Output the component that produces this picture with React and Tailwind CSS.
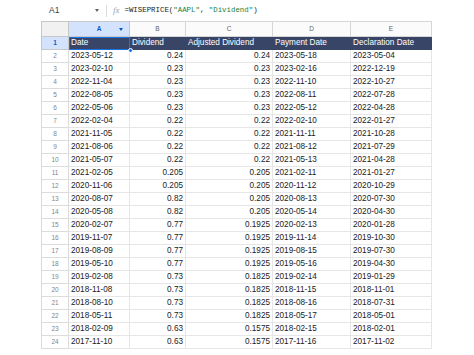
import React from 'react';

const rows = [
  ['2023-05-12', '0.24', '0.24', '2023-05-18', '2023-05-04'],
  ['2023-02-10', '0.23', '0.23', '2023-02-16', '2022-12-19'],
  ['2022-11-04', '0.23', '0.23', '2022-11-10', '2022-10-27'],
  ['2022-08-05', '0.23', '0.23', '2022-08-11', '2022-07-28'],
  ['2022-05-06', '0.23', '0.23', '2022-05-12', '2022-04-28'],
  ['2022-02-04', '0.22', '0.22', '2022-02-10', '2022-01-27'],
  ['2021-11-05', '0.22', '0.22', '2021-11-11', '2021-10-28'],
  ['2021-08-06', '0.22', '0.22', '2021-08-12', '2021-07-29'],
  ['2021-05-07', '0.22', '0.22', '2021-05-13', '2021-04-28'],
  ['2021-02-05', '0.205', '0.205', '2021-02-11', '2021-01-27'],
  ['2020-11-06', '0.205', '0.205', '2020-11-12', '2020-10-29'],
  ['2020-08-07', '0.82', '0.205', '2020-08-13', '2020-07-30'],
  ['2020-05-08', '0.82', '0.205', '2020-05-14', '2020-04-30'],
  ['2020-02-07', '0.77', '0.1925', '2020-02-13', '2020-01-28'],
  ['2019-11-07', '0.77', '0.1925', '2019-11-14', '2019-10-30'],
  ['2019-08-09', '0.77', '0.1925', '2019-08-15', '2019-07-30'],
  ['2019-05-10', '0.77', '0.1925', '2019-05-16', '2019-04-30'],
  ['2019-02-08', '0.73', '0.1825', '2019-02-14', '2019-01-29'],
  ['2018-11-08', '0.73', '0.1825', '2018-11-15', '2018-11-01'],
  ['2018-08-10', '0.73', '0.1825', '2018-08-16', '2018-07-31'],
  ['2018-05-11', '0.73', '0.1825', '2018-05-17', '2018-05-01'],
  ['2018-02-09', '0.63', '0.1575', '2018-02-15', '2018-02-01'],
  ['2017-11-10', '0.63', '0.1575', '2017-11-16', '2017-11-02'],
];

const cols = 'grid grid-cols-[28px_61px_56px_87px_78px_81px]';

export default function App() {
  return (
    <div className="w-[474px] h-[355px] bg-white overflow-hidden font-['Liberation_Sans',Arial,sans-serif] text-[#202124]">
      {/* formula bar */}
      <div className="h-[21px] flex items-center pl-[49px]">
        <span className="w-[40px] text-[8.5px] text-[#3c4043]">A1</span>
        <span className="w-0 h-0 ml-[6px] border-l-[2.5px] border-r-[2.5px] border-t-[3px] border-l-transparent border-r-transparent border-t-[#5f6368]" />
        <span className="ml-[7px] w-px h-[12px] bg-[#dadce0]" />
        <span className="ml-[6px] text-[9px] italic text-[#9aa0a6] font-['Liberation_Serif',serif]">fx</span>
        <span className="ml-[5px] text-[7.4px] font-['Liberation_Mono',monospace] whitespace-pre text-[#202124]">
          =WISEPRICE(<span className="text-[#188038]">"AAPL"</span>, <span className="text-[#188038]">"Dividend"</span>)
        </span>
      </div>

      <div className="ml-[41px] w-[391px]">
        {/* column letters */}
        <div className={`${cols} h-[16px] text-[6.5px] text-[#5f6368]`}>
          <div className="bg-[#f1f1f1] border-r border-b border-t border-l border-[#c7c7c7]" />
          <div className="relative bg-[#d3e3fd] border-b border-r border-t border-[#c7c7c7] flex items-center justify-center font-bold text-[#0b57d0]">
            A
            <span className="absolute right-[6px] top-[6px] w-0 h-0 border-l-[2.5px] border-r-[2.5px] border-t-[3px] border-l-transparent border-r-transparent border-t-[#0b57d0]" />
          </div>
          {['B', 'C', 'D', 'E'].map((l) => (
            <div key={l} className="bg-[#fbfbfb] border-b border-r border-t border-[#d6d6d6] flex items-center justify-center">
              {l}
            </div>
          ))}
        </div>

        {/* header row */}
        <div className={`${cols} h-[13px] text-[8.2px]`}>
          <div className="bg-[#d3e3fd] border-l border-r border-b border-[#c7c7c7] flex items-center justify-center text-[6.5px] font-bold text-[#0b57d0]">
            1
          </div>
          <div className="relative bg-[#394566] text-white flex items-center pl-[2px]">
            Date
            <span className="absolute inset-0 border-[1.5px] border-[#1a73e8]" />
            <span className="absolute right-[-3px] bottom-[-3px] w-[5px] h-[5px] rounded-full bg-[#1a73e8] border border-white" />
          </div>
          {['Dividend', 'Adjusted Dividend', 'Payment Date', 'Declaration Date'].map((h) => (
            <div key={h} className="bg-[#394566] text-white flex items-center pl-[2px] whitespace-nowrap overflow-hidden">
              {h}
            </div>
          ))}
        </div>

        {/* data rows */}
        {rows.map((r, i) => (
          <div key={i} className={`${cols} h-[13px] text-[8.2px]`}>
            <div className="bg-white border-l border-r border-b border-[#dcdcdc] flex items-center justify-center text-[6.5px] text-[#80868b]">
              {i + 2}
            </div>
            <div className="border-r border-b border-[#e6e6e6] flex items-center pl-[2px]">{r[0]}</div>
            <div className="border-r border-b border-[#e6e6e6] flex items-center justify-end pr-[2px]">{r[1]}</div>
            <div className="border-r border-b border-[#e6e6e6] flex items-center justify-end pr-[2px]">{r[2]}</div>
            <div className="border-r border-b border-[#e6e6e6] flex items-center pl-[2px]">{r[3]}</div>
            <div className="border-r border-b border-[#e6e6e6] flex items-center pl-[2px]">{r[4]}</div>
          </div>
        ))}
      </div>
    </div>
  );
}
